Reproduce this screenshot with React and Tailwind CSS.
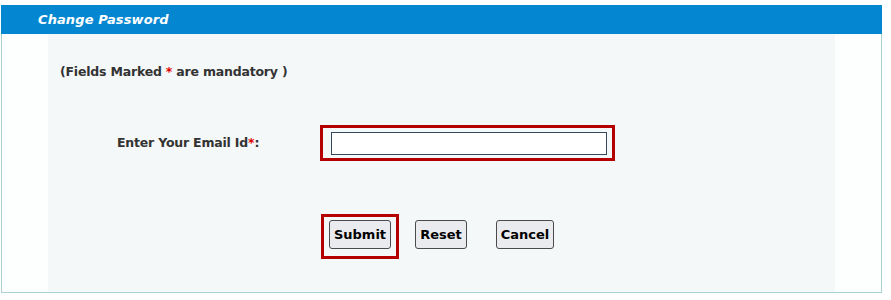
export default function App() {
  const font = { fontFamily: '"DejaVu Sans", Verdana, sans-serif' };
  return (
    <div className="w-[891px] h-[300px] bg-white pt-[5px] pl-[1px]" style={font}>
      <div className="w-[881px] h-[288px] border-x border-b border-[#a9d2d0] flex flex-col">
        <div className="h-[29px] bg-[#0487d0] flex items-center pl-[37px] -mx-px -ml-[1px]">
          <span className="text-white italic font-bold text-[13px] tracking-[0.1px]">Change Password</span>
        </div>
        <div className="flex-1 bg-[#fdfefe] flex px-[46px]">
          <div className="flex-1 bg-[#f4f8f8] flex flex-col text-[12.5px] tracking-[-0.2px] font-bold text-[#333333]">
            <div className="pl-[12px] pt-[29px] h-[76px]">
              (Fields Marked <span className="text-[#e00000]">*</span> are mandatory )
            </div>
            <div className="flex items-center h-[36px] mt-[15px]">
              <div className="w-[272px] pl-[69px]">
                Enter Your Email Id<span className="text-[#e00000]">*</span>:
              </div>
              <div className="w-[295px] h-[36px] border-[3px] border-[#b50000] flex items-center pl-[8px]">
                <input className="w-[276px] h-[23px] bg-white border border-[#34495e] outline-none" />
              </div>
            </div>
            <div className="flex items-start mt-[53px] pl-[273px] text-black tracking-normal">
              <div className="w-[78px] h-[45px] border-[3px] border-[#b50000] pt-[3px] pl-[5px]">
                <button className="w-[62px] h-[29px] bg-[#e9ebee] border border-[#4b4b4b] rounded-[3px] font-bold text-[13px]">Submit</button>
              </div>
              <button className="mt-[6px] ml-[16px] w-[52px] h-[29px] bg-[#e9ebee] border border-[#4b4b4b] rounded-[3px] font-bold text-[13px]">Reset</button>
              <button className="mt-[6px] ml-[29px] w-[58px] h-[29px] bg-[#e9ebee] border border-[#4b4b4b] rounded-[3px] font-bold text-[13px]">Cancel</button>
            </div>
          </div>
        </div>
      </div>
    </div>
  );
}
